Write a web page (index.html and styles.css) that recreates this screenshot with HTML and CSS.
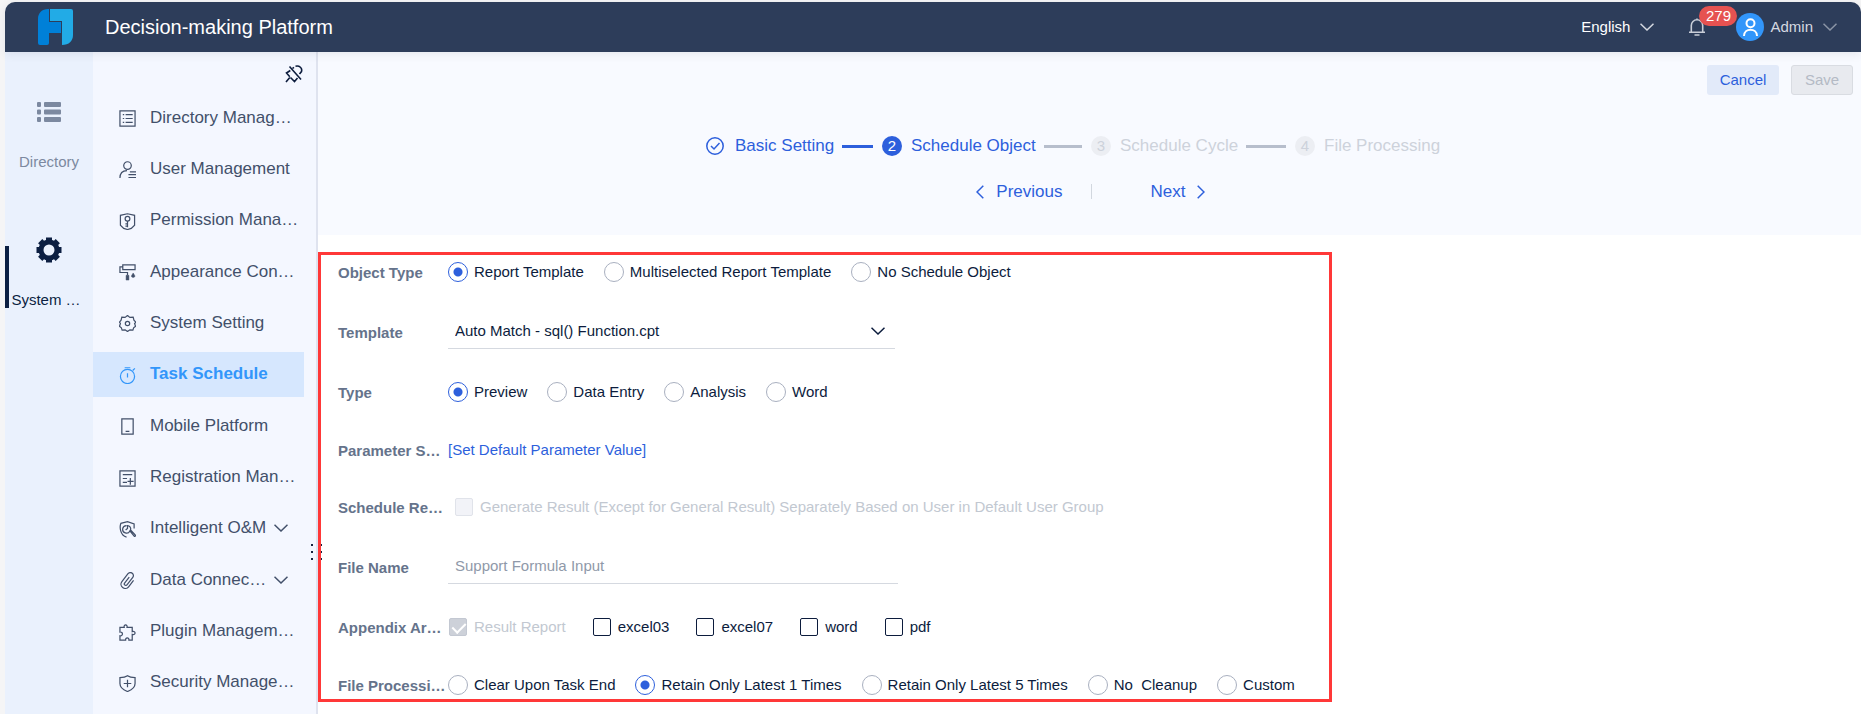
FILE: index.html
```html
<!DOCTYPE html>
<html lang="en">
<head>
<meta charset="utf-8">
<title>Decision-making Platform</title>
<link rel="stylesheet" href="styles.css">
</head>
<body>
<header class="topbar">
  <svg class="logo" viewBox="0 0 36 36" aria-hidden="true">
    <path fill="#0080d8" d="M11 0h-1C4 0 0 4 0 10v24q0 2 2 2h7q2 0 2-2V24h12V13H11z"/>
    <path fill="#22abe6" d="M12 0h21q2 0 2 2v24c0 6-4 10-11 10V12H12z"/>
  </svg>
  <h1 class="brand">Decision-making Platform</h1>
  <button class="top-menu language" type="button" aria-haspopup="true">English
    <svg class="chevron" viewBox="0 0 14 8" aria-hidden="true"><path d="M.5.7 7 7 13.5.7"/></svg>
  </button>
  <button class="bell" type="button" aria-label="Notifications">
    <svg viewBox="0 0 18 18" aria-hidden="true"><path d="M1 14.300h16M3.300 14V7.500a5.700 5.700 0 0 1 11.400 0V14M9 1.800V.5M6.500 17h5"/></svg>
    <span class="badge">279</span>
  </button>
  <button class="top-menu account" type="button" aria-haspopup="true">
    <svg class="avatar" viewBox="0 0 28 28" aria-hidden="true"><circle cx="14" cy="14" r="14" fill="#3296fa"/><circle cx="14.500" cy="10.200" r="4"/><path d="M8 23c0-8.500 13-8.500 13 0"/></svg>
    Admin
    <svg class="chevron" viewBox="0 0 14 8" aria-hidden="true"><path d="M.5.7 7 7 13.5.7"/></svg>
  </button>
</header>

<div class="workspace">
  <nav class="rail" aria-label="Sections">
    <a class="rail-item" href="#">
      <svg viewBox="0 0 26 26" aria-hidden="true"><path fill="currentColor" d="M2 3h2q1 0 1 1v3q0 1-1 1H2Q1 8 1 7V4q0-1 1-1zm7 0h15q1 0 1 1v3q0 1-1 1H9Q8 8 8 7V4q0-1 1-1zM2 10.500h2q1 0 1 1v3q0 1-1 1H2q-1 0-1-1v-3q0-1 1-1zm7 0h15q1 0 1 1v3q0 1-1 1H9q-1 0-1-1v-3q0-1 1-1zM2 18h2q1 0 1 1v3q0 1-1 1H2q-1 0-1-1v-3q0-1 1-1zm7 0h15q1 0 1 1v3q0 1-1 1H9q-1 0-1-1v-3q0-1 1-1z"/></svg>
      <span>Directory</span>
    </a>
    <a class="rail-item current" href="#">
      <svg viewBox="0 0 26 26" aria-hidden="true"><circle cx="13" cy="13" r="8" fill="none" stroke="currentColor" stroke-width="5"/><path stroke="currentColor" stroke-width="6" d="M13 .5v4m0 17v4M.5 13h4m17 0h4M4.200 4.200 7 7m12 12 2.800 2.800M4.200 21.800 7 19M19 7l2.800-2.800"/></svg>
      <span>System …</span>
    </a>
  </nav>

  <aside class="sidebar">
    <button class="pin" type="button" aria-label="Unpin menu">
      <svg viewBox="0 0 18 18" aria-hidden="true"><path d="M4.500 1.500 16 14.500M7.500 3.300 9 2.300M10.500 1.200c4-1 7 2 6 5.300L14.500 9M5.300 5.500 1.500 8l3.300 3.800M1 17l3.800-4.500M5.500 12.500l4 4 3-3.500"/></svg>
    </button>
    <nav class="menu" aria-label="System">
      <a class="menu-item" href="#"><svg class="icon" viewBox="0 0 18 18"><path d="M1 1h16v16H1zM4 5h1.500M7 5h7.500M4 9h1.500M7 9h7.500M4 13h1.500M7 13h7.500"/></svg>Directory Manag…</a>
      <a class="menu-item" href="#"><svg class="icon" viewBox="0 0 18 18"><circle cx="9" cy="4.800" r="4"/><path d="M1 18c0-4.500 2.500-7.500 7.500-7.700M11.500 11.500H18M10 14.500h8M10 17.500h8"/></svg>User Management</a>
      <a class="menu-item" href="#"><svg class="icon" viewBox="0 0 18 18"><path d="M9 .8 1.500 2.500V13L5 16.300 9 17.500l4-1.200 3.500-3.300V2.500z"/><circle cx="9" cy="6" r="2.500"/><path d="M9 8.500v6.500M9 11.500H6.800M9 14H6.800"/></svg>Permission Mana…</a>
      <a class="menu-item" href="#"><svg class="icon" viewBox="0 0 18 18"><path d="M4 1h13v5H4zM4 3H1v6h8v3"/><path fill="currentColor" d="M7.500 12h3v5h-3zM15 9.500l-1.800 3c-.5 2.300 4.100 2.300 3.600 0z" stroke-width=".5"/></svg>Appearance Con…</a>
      <a class="menu-item" href="#"><svg class="icon" viewBox="0 0 18 18"><path d="m6.500 2.500 2.500-2 2.500 2 3.500-.3.800 3.300L18 7.700 16.500 9l1 3-2 1.500-.8 2.500-3.200-.3L9 17.500l-2.500-1.800-3.200.3-.8-2.500-2-1.500 1-3L.5 7.500l1.700-2L3 2.200z"/><circle cx="9" cy="9" r="2.300"/></svg>System Setting</a>
      <a class="menu-item active" href="#" aria-current="page"><svg class="icon" viewBox="0 0 18 18"><circle cx="9" cy="10" r="7.500"/><path d="M6 .8h6M9 6.500V11M14.500 3.700l2.300-2.200"/></svg>Task Schedule</a>
      <a class="menu-item" href="#"><svg class="icon" viewBox="0 0 18 18"><path d="M3 1h12v16H3zM7 14.200h4"/></svg>Mobile Platform</a>
      <a class="menu-item" href="#"><svg class="icon" viewBox="0 0 18 18"><path d="M1 1h16v16H1zM4 5h10M4 9h4.500M4 13h4.500M12 8.500v7M9 12h6.500"/></svg>Registration Man…</a>
      <a class="menu-item" href="#"><svg class="icon" viewBox="0 0 18 18"><path d="M16 8V3L9 .8 2 2.500C.5 6 1 15.500 8 17"/><path d="M8 4.800a4 4 0 1 0 3.500 5.700L16 16c.8.800 2-.4 1.200-1.200l-5-5.300C13 7 11 4.700 9 4.800v3L7 9.500"/></svg><span>Intelligent O&amp;M</span><svg class="chevron" viewBox="0 0 14 8"><path d="M.5.7 7 7 13.5.7"/></svg></a>
      <a class="menu-item" href="#"><svg class="icon" viewBox="0 0 18 18"><path transform="rotate(38 9 9)" d="M14 5v8.500a4.500 4.500 0 0 1-9 0V3a3.200 3.200 0 0 1 6.400 0v10a1.600 1.600 0 0 1-3.200 0V5"/></svg><span>Data Connec…</span><svg class="chevron" viewBox="0 0 14 8"><path d="M.5.7 7 7 13.5.7"/></svg></a>
      <a class="menu-item" href="#"><svg class="icon" viewBox="0 0 18 18"><path d="M1 3.500h4.500c-1-3.300 4-3.300 3 0H14V8c4-1.300 4 4.300 0 3v6h-3.500c.5-3-4-3-3.500 0H1v-4.500c3.500.5 3.500-4.500 0-4z"/></svg>Plugin Managem…</a>
      <a class="menu-item" href="#"><svg class="icon" viewBox="0 0 18 18"><path d="M9 .8C7 2.300 4 2.800 1 2.800V9c0 4.500 4 7 8 8.500 4-1.500 8-4 8-8.500V2.800c-3 0-6-.5-8-2zM9 5v8M5 9h8"/></svg>Security Manage…</a>
    </nav>
    <svg class="grip" viewBox="0 0 12 18" aria-hidden="true"><path fill="#16233f" d="M0 0h2v2H0zm9 0h2v2H9zM0 7h2v2H0zm9 0h2v2H9zM0 14h2v2H0zm9 0h2v2H9z"/></svg>
  </aside>

  <main class="content">
    <section class="wizard">
      <div class="actions">
        <button class="btn cancel" type="button">Cancel</button>
        <button class="btn save" type="button" disabled>Save</button>
      </div>
      <ol class="steps">
        <li class="step done"><svg class="tick" viewBox="0 0 18 18" aria-hidden="true"><circle cx="9" cy="9" r="8.200"/><path d="m5 9 3 3 5.500-6"/></svg>Basic Setting</li>
        <li class="step now"><span class="num">2</span>Schedule Object</li>
        <li class="step"><span class="num">3</span>Schedule Cycle</li>
        <li class="step"><span class="num">4</span>File Processing</li>
      </ol>
      <div class="pager">
        <button class="page-link prev" type="button"><svg viewBox="0 0 8 14" aria-hidden="true"><path d="M7.300.700 1 7l6.300 6.300"/></svg>Previous</button>
        <button class="page-link next" type="button">Next<svg viewBox="0 0 8 14" aria-hidden="true"><path d="M.700.700 7 7 .700 13.300"/></svg></button>
      </div>
    </section>

    <form class="settings">
      <div class="row" role="radiogroup" aria-labelledby="l-object">
        <span class="label" id="l-object">Object Type</span>
        <div class="options">
          <label class="option"><input class="radio" type="radio" name="object" checked>Report Template</label>
          <label class="option"><input class="radio" type="radio" name="object">Multiselected Report Template</label>
          <label class="option"><input class="radio" type="radio" name="object">No Schedule Object</label>
        </div>
      </div>
      <div class="row">
        <label class="label" for="template">Template</label>
        <div class="picker">
          <select class="field" id="template"><option>Auto Match - sql() Function.cpt</option></select>
          <svg class="chevron" viewBox="0 0 14 8" aria-hidden="true"><path d="M.5.7 7 7 13.5.7"/></svg>
        </div>
      </div>
      <div class="row" role="radiogroup" aria-labelledby="l-type">
        <span class="label" id="l-type">Type</span>
        <div class="options">
          <label class="option"><input class="radio" type="radio" name="type" checked>Preview</label>
          <label class="option"><input class="radio" type="radio" name="type">Data Entry</label>
          <label class="option"><input class="radio" type="radio" name="type">Analysis</label>
          <label class="option"><input class="radio" type="radio" name="type">Word</label>
        </div>
      </div>
      <div class="row short">
        <span class="label">Parameter S…</span>
        <a class="param-link" href="#">[Set Default Parameter Value]</a>
      </div>
      <div class="row">
        <span class="label">Schedule Re…</span>
        <div class="options inset">
          <label class="option off"><input class="check" type="checkbox" disabled>Generate Result (Except for General Result) Separately Based on User in Default User Group</label>
        </div>
      </div>
      <div class="row">
        <label class="label" for="filename">File Name</label>
        <input class="field filename" id="filename" type="text" placeholder="Support Formula Input">
      </div>
      <div class="row" role="group" aria-labelledby="l-appendix">
        <span class="label" id="l-appendix">Appendix Ar…</span>
        <div class="options checks">
          <label class="option off"><input class="check" type="checkbox" checked disabled>Result Report</label>
          <label class="option"><input class="check" type="checkbox">excel03</label>
          <label class="option"><input class="check" type="checkbox">excel07</label>
          <label class="option"><input class="check" type="checkbox">word</label>
          <label class="option"><input class="check" type="checkbox">pdf</label>
        </div>
      </div>
      <div class="row last" role="radiogroup" aria-labelledby="l-files">
        <span class="label" id="l-files">File Processi…</span>
        <div class="options">
          <label class="option"><input class="radio" type="radio" name="files">Clear Upon Task End</label>
          <label class="option"><input class="radio" type="radio" name="files" checked>Retain Only Latest 1 Times</label>
          <label class="option"><input class="radio" type="radio" name="files">Retain Only Latest 5 Times</label>
          <label class="option"><input class="radio" type="radio" name="files">No &nbsp;Cleanup</label>
          <label class="option"><input class="radio" type="radio" name="files">Custom</label>
        </div>
      </div>
    </form>
  </main>
</div>
</body>
</html>
```
FILE: styles.css
```css
* { box-sizing: border-box; }

body {
  margin: 0;
  padding: 2px 0 0 5px;
  min-height: 100vh;
  display: flex;
  flex-direction: column;
  background: #f5f5f6;
  color: #0c1c3d;
  font: 15px/20px "Liberation Sans", Arial, sans-serif;
}

button, input, select { font: inherit; color: inherit; }
button { padding: 0; border: 0; background: none; }
a { color: inherit; text-decoration: none; }
svg { display: block; flex: none; fill: none; stroke: currentColor; }
.chevron { width: 14px; height: 8px; stroke-width: 1.5; }

/* Top bar */
.topbar {
  position: relative;
  z-index: 2;
  display: flex;
  align-items: center;
  height: 50px;
  padding: 0 24px 0 33px;
  border-radius: 10px 10px 0 0;
  background: #2d3d5a;
  color: #fff;
  box-shadow: 0 2px 10px rgba(60, 70, 90, 0.1);
}
.logo { width: 36px; height: 36px; stroke: none; }
.brand { margin: 0 auto 0 31px; font-size: 20px; font-weight: 400; white-space: nowrap; }
.top-menu { display: flex; align-items: center; gap: 10px; }
.language .chevron { stroke: #d5d9e0; }
.bell { position: relative; margin-left: 34px; color: #c9ced8; }
.bell svg { width: 18px; height: 18px; stroke-width: 1.6; }
.badge {
  position: absolute;
  left: 11px;
  top: -12px;
  width: 38px;
  border-radius: 10px;
  background: #e65251;
  color: #fff;
}
.account { margin-left: 30px; color: #d5d9e0; }
.avatar { width: 28px; height: 28px; margin-right: -4px; stroke: #fff; stroke-width: 2; }
.avatar [fill] { stroke: none; }
.account .chevron { stroke: #8b95a6; }

.workspace { flex: 1; display: flex; background: #fff; }

/* Left rail */
.rail { flex: none; width: 88px; padding-top: 47px; display: flex; flex-direction: column; gap: 74px; background: #eaf1fd; }
.rail-item {
  display: flex;
  flex-direction: column;
  align-items: center;
  gap: 28px;
  height: 64px;
  color: #7c89a0;
  line-height: 18px;
  white-space: nowrap;
}
.rail-item svg { width: 26px; height: 26px; stroke: none; }
.rail-item.current { color: #0c1f42; position: relative; }
.rail-item.current span { padding-right: 6px; }
.rail-item.current::before { content: ""; position: absolute; left: 0; top: 9px; width: 4px; height: 62px; background: #0c1f42; }

/* Sidebar */
.sidebar {
  position: relative;
  flex: none;
  width: 225px;
  display: flex;
  flex-direction: column;
  padding-bottom: 9px;
  background: #f4f7ff;
  border-right: 2px solid #dfe3ef;
}
.pin { align-self: flex-end; margin: 13px 13px 12px 0; color: #0c1c3d; }
.pin svg { width: 18px; height: 18px; stroke-width: 1.6; }
.menu { flex: 1; display: flex; flex-direction: column; justify-content: space-between; margin-right: 12px; }
.menu-item {
  display: flex;
  align-items: center;
  height: 45px;
  padding-left: 26px;
  font-size: 17px;
  color: #42506a;
  white-space: nowrap;
}
.icon { width: 17px; height: 17px; margin: 2px 14px 0 0; stroke-width: 1.3; }
.menu-item .chevron { margin-left: auto; margin-right: 16px; }
.menu-item.active { background: #d6e7fe; color: #3296fa; font-weight: 700; }
.grip { position: absolute; right: -7px; bottom: 152px; width: 12px; height: 18px; stroke: none; }

/* Wizard header */
.content { flex: 1; min-width: 0; }
.wizard { height: 183px; padding: 13px 8px 0 0; background: #f8faff; }
.actions { display: flex; justify-content: flex-end; gap: 12px; }
.btn { height: 30px; border-radius: 3px; }
.cancel { width: 72px; background: #e2eaf9; color: #2d5fdc; }
.save { width: 62px; background: #e8eaef; border: 1px solid #d9dce2; color: #b4bac5; }

.steps {
  display: grid;
  grid-template-columns: 176px 209px 204px 150px;
  justify-content: center;
  margin: 40px 20px 0 0;
  padding: 0;
  list-style: none;
  font-size: 17px;
  line-height: 22px;
  color: #cdd2db;
}
.step { display: flex; align-items: center; white-space: nowrap; }
.step:not(:last-child)::after { content: ""; flex: 1; height: 3px; margin: 0 9px 0 8px; background: #b7becc; }
.step.done, .step.now { color: #2d5fdc; }
.step.done:not(:last-child)::after { background: #2d5fdc; }
.tick { width: 18px; height: 18px; margin-right: 11px; stroke-width: 1.5; }
.num { width: 20px; height: 20px; margin-right: 9px; border-radius: 50%; background: #eceef3; text-align: center; font-size: 15px; line-height: 20px; }
.now .num { background: #2d5fdc; color: #fff; }

.pager { display: grid; grid-template-columns: 1fr 1fr; margin: 23px 0 0 10px; line-height: 24px; }
.page-link { display: flex; align-items: center; gap: 12px; font-size: 17px; color: #2d5fdc; }
.page-link svg { width: 8px; height: 14px; stroke-width: 1.5; }
.prev { justify-self: end; padding-right: 28px; }
.next { justify-self: start; padding-left: 60px; position: relative; }
.next::before { content: ""; position: absolute; left: 0; top: 4px; width: 1px; height: 15px; background: #d2d7df; }

/* Form */
.settings {
  position: relative;
  z-index: 1;
  display: flex;
  flex-direction: column;
  gap: 30px;
  max-width: 1014px;
  margin-top: 17px;
  padding: 2px 17px 1px;
  border: 3px solid #ff3838;
}
.row { display: flex; align-items: center; height: 30px; }
.row.short { height: 25px; }
.row.last { height: 26px; }
.label { flex: none; width: 110px; font-weight: 700; color: #65738b; white-space: nowrap; padding-top: 2px; }
.options { display: flex; gap: 20px; }
.checks { gap: 27px; padding-left: 1px; }
.inset { padding-left: 7px; }
.option { display: flex; align-items: center; gap: 6px; white-space: nowrap; }
.option.off { color: #c2c8d1; }

.radio, .check { appearance: none; flex: none; margin: 0; }
.radio { width: 20px; height: 20px; border: 1px solid #a9b0c0; border-radius: 50%; background: #fff; }
.radio:checked { border-color: #2d5fdc; background: radial-gradient(circle, #2d5fdc 4px, #fff 5px); }
.check { position: relative; width: 18px; height: 18px; margin-right: 1px; border: 1px solid #0c1c3d; border-radius: 2px; background: #fff; }
.check:disabled { border-color: #e0e3ea; background: #f2f3f8; }
.check:checked:disabled { border-color: #c3c8d2; background: #cdd1d9; }
.check:checked::after { content: ""; position: absolute; left: 5px; top: 1px; width: 6px; height: 11px; border: solid #fff; border-width: 0 2px 2px 0; transform: rotate(45deg); }

.picker { position: relative; width: 447px; }
.picker .chevron { position: absolute; right: 10px; top: 12px; pointer-events: none; }
.field {
  appearance: none;
  display: block;
  width: 100%;
  height: 34px;
  padding: 0 7px 2px;
  border: 0;
  border-bottom: 1px solid #d5d9e0;
  border-radius: 0;
  background: none;
}
.filename { width: 450px; }
.filename::placeholder { color: #8f99a9; opacity: 1; }
.param-link { color: #2d5fdc; }
```
